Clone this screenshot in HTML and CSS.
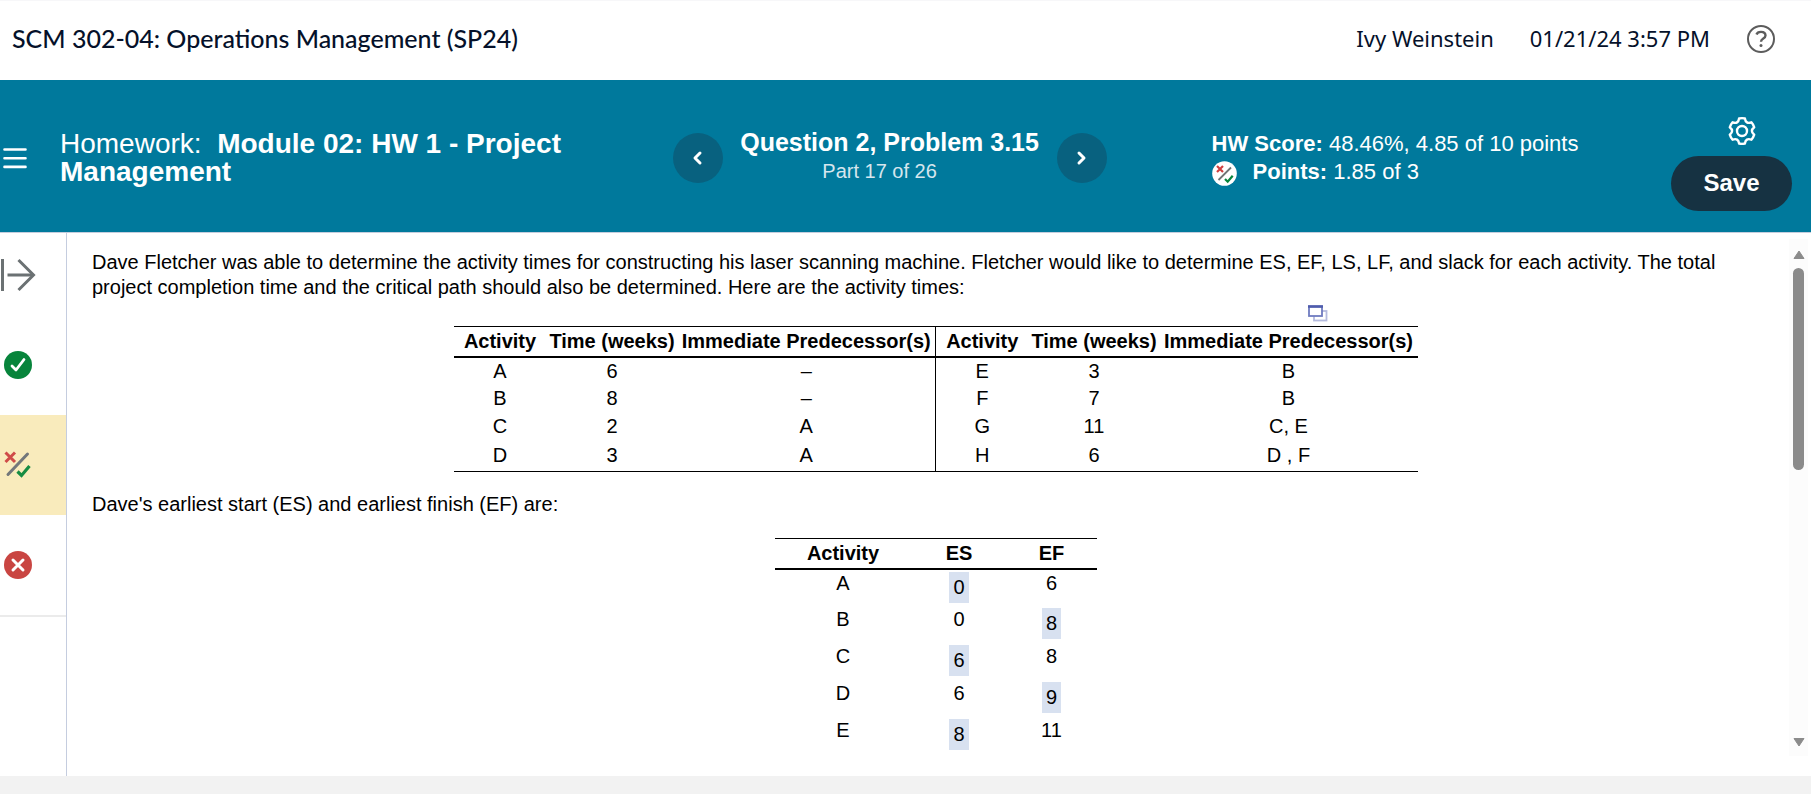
FILE: index.html
```html
<!DOCTYPE html>
<html lang="en">
<head>
<meta charset="utf-8">
<title>SCM 302-04: Operations Management (SP24)</title>
<link rel="stylesheet" href="styles.css">
</head>
<body>
<div class="page">
  <header class="topbar">
    <h1 class="course">SCM 302-04: Operations Management (SP24)</h1>
    <span class="user">Ivy Weinstein</span>
    <time class="clock" datetime="2024-01-21T15:57">01/21/24 3:57 PM</time>
    <button class="icon-button help" type="button" aria-label="Help">
      <svg width="30" height="30" viewBox="0 0 30 30" fill="none" stroke="#5c5c5c" stroke-width="2">
        <circle cx="15" cy="15" r="13"/>
        <path d="M10.500 10.500c.6-1.800 2.300-2.600 4.500-2.600 2.600 0 4.500 1.400 4.500 3.700 0 3.200-4.500 2.700-4.500 6.200" stroke-width="2.400"/>
        <circle cx="15" cy="21.600" r="1.500" fill="#5c5c5c" stroke="none"/>
      </svg>
    </button>
  </header>

  <section class="banner">
    <button class="icon-button menu" type="button" aria-label="Menu">
      <svg width="24" height="24" viewBox="0 0 24 24" stroke="#fff" stroke-width="2.600" stroke-linecap="round">
        <path d="M1.500 3.500h21M1.500 12.200h21M1.500 20.900h21"/>
      </svg>
    </button>
    <h2 class="assignment"><span class="kind">Homework:</span>&nbsp; Module 02: HW 1 - Project Management</h2>
    <nav class="pager" aria-label="Questions">
      <button class="round" type="button" aria-label="Previous question">
        <svg width="50" height="50" viewBox="0 0 50 50" fill="none" stroke="#fff" stroke-width="3" stroke-linecap="round" stroke-linejoin="round"><path d="M27 20l-5 5 5 5"/></svg>
      </button>
      <div class="question">
        <h3 class="question-title">Question 2, Problem 3.15</h3>
        <p class="part">Part 17 of 26</p>
      </div>
      <button class="round" type="button" aria-label="Next question">
        <svg width="50" height="50" viewBox="0 0 50 50" fill="none" stroke="#fff" stroke-width="3" stroke-linecap="round" stroke-linejoin="round"><path d="M22 20l5 5-5 5"/></svg>
      </button>
    </nav>
    <div class="score">
      <p class="score-line"><b>HW Score:</b> 48.46%, 4.85 of 10 points</p>
      <p class="score-line points">
        <svg width="25" height="28" viewBox="0 0 25 28" fill="none">
          <circle cx="12.500" cy="15.500" r="12.300" fill="#fff"/>
          <path d="M5 8l6 6M11 8l-6 6" stroke="#cf4040" stroke-width="2.200"/>
          <path d="M19 9.500L6.500 22" stroke="#6f7475" stroke-width="1.800"/>
          <path d="M13 21l2.700 2.700 5-6" stroke="#07843b" stroke-width="2.200"/>
        </svg>
        <span><b>Points:</b> 1.85 of 3</span>
      </p>
    </div>
    <div class="actions">
      <button class="icon-button" type="button" aria-label="Settings">
        <svg width="30" height="30" viewBox="0 0 30 30" fill="none" stroke="#fff" stroke-width="2.400" stroke-linejoin="round">
          <path d="M12.100 2.500A12.800 12.800 0 0 1 17.900 2.500Q18.800 8.400 24.400 6.300A12.800 12.800 0 0 1 27.200 11.300Q22.600 15 27.200 18.700A12.800 12.800 0 0 1 24.400 23.700Q18.800 21.600 17.900 27.500A12.800 12.800 0 0 1 12.100 27.500Q11.200 21.600 5.600 23.700A12.800 12.800 0 0 1 2.800 18.700Q7.400 15 2.800 11.300A12.800 12.800 0 0 1 5.600 6.300Q11.200 8.400 12.100 2.500z"/>
          <circle cx="15" cy="15" r="5"/>
        </svg>
      </button>
      <button class="save" type="button">Save</button>
    </div>
  </section>

  <div class="workspace">
    <nav class="rail" aria-label="Question list">
      <button class="rail-item expand" type="button" aria-label="Expand list">
        <svg width="36" height="34" viewBox="0 0 36 34" fill="none" stroke="#6b7173" stroke-width="3">
          <path d="M2.500 1v32M7.500 17H33"/><path d="M18.500 2l15 15-15 15"/>
        </svg>
      </button>
      <button class="rail-item" type="button" aria-label="Question 1, correct">
        <svg width="28" height="28" viewBox="0 0 28 28" fill="none" stroke="#fff" stroke-width="2.800" stroke-linecap="round" stroke-linejoin="round">
          <circle cx="14" cy="14" r="14" fill="#07843b" stroke="none"/><path d="M8 15l4 4 8-10.500"/>
        </svg>
      </button>
      <button class="rail-item current" type="button" aria-label="Question 2, partially correct">
        <svg width="28" height="28" viewBox="0 0 28 28" fill="none">
          <path d="M1.500 1.500l9.500 9.500M11 1.500L1.500 11" stroke="#cf4b48" stroke-width="3"/>
          <path d="M23.500 3L4 23.500" stroke="#73777a" stroke-width="3" stroke-linecap="round"/>
          <path d="M13.500 20.500l4 4L25.500 15" stroke="#178c42" stroke-width="3.200"/>
        </svg>
      </button>
      <button class="rail-item" type="button" aria-label="Question 3, incorrect">
        <svg width="28" height="28" viewBox="0 0 28 28" fill="none" stroke="#fff" stroke-width="3" stroke-linecap="round">
          <circle cx="14" cy="14" r="14" fill="#c94542" stroke="none"/><path d="M9 9l10 10M19 9L9 19"/>
        </svg>
      </button>
    </nav>

    <main class="content">
      <p class="text">Dave Fletcher was able to determine the activity times for constructing his laser scanning machine. Fletcher would like to determine ES, EF, LS, LF, and slack for each activity. The total project completion time and the critical path should also be determined. Here are the activity times:</p>
      <div class="figure">
        <button class="icon-button popout" type="button" aria-label="Open table in new window">
          <svg width="20" height="17" viewBox="0 0 20 17" fill="none">
            <rect x="6" y="6" width="12.500" height="9.500" stroke="#b5bbde" stroke-width="1.800"/>
            <rect x="1" y="1.500" width="13" height="9.500" fill="#fff" stroke="#6f7cc0" stroke-width="1.800"/>
            <path d="M0 1.500h15" stroke="#4f5cac" stroke-width="2.600"/>
          </svg>
        </button>
        <table class="data times">
          <colgroup><col class="c-act"><col class="c-time"><col class="c-pred"><col class="c-act"><col class="c-time"><col class="c-pred"></colgroup>
          <thead>
            <tr><th>Activity</th><th>Time (weeks)</th><th class="split">Immediate Predecessor(s)</th><th>Activity</th><th>Time (weeks)</th><th>Immediate Predecessor(s)</th></tr>
          </thead>
          <tbody>
            <tr><td>A</td><td>6</td><td class="split">–</td><td>E</td><td>3</td><td>B</td></tr>
            <tr><td>B</td><td>8</td><td class="split">–</td><td>F</td><td>7</td><td>B</td></tr>
            <tr><td>C</td><td>2</td><td class="split">A</td><td>G</td><td>11</td><td>C, E</td></tr>
            <tr><td>D</td><td>3</td><td class="split">A</td><td>H</td><td>6</td><td>D , F</td></tr>
          </tbody>
        </table>
      </div>
      <p class="text">Dave's earliest start (ES) and earliest finish (EF) are:</p>
      <table class="data results">
        <colgroup><col class="r-act"><col class="r-es"><col class="r-ef"></colgroup>
        <thead><tr><th>Activity</th><th>ES</th><th>EF</th></tr></thead>
        <tbody>
          <tr><td>A</td><td><span class="answer">0</span></td><td>6</td></tr>
          <tr><td>B</td><td>0</td><td><span class="answer">8</span></td></tr>
          <tr><td>C</td><td><span class="answer">6</span></td><td>8</td></tr>
          <tr><td>D</td><td>6</td><td><span class="answer">9</span></td></tr>
          <tr><td>E</td><td><span class="answer">8</span></td><td>11</td></tr>
        </tbody>
      </table>
    </main>

    <div class="scrollbar" aria-hidden="true">
      <svg width="12" height="10" viewBox="0 0 12 10"><path d="M6 1l5 7.500H1z" fill="#8b8b8b" stroke="#8b8b8b" stroke-linejoin="round"/></svg>
      <div class="track"><div class="thumb"></div></div>
      <svg width="12" height="10" viewBox="0 0 12 10"><path d="M6 9L1 1.500h10z" fill="#8b8b8b" stroke="#8b8b8b" stroke-linejoin="round"/></svg>
    </div>
  </div>
  <footer class="footer"></footer>
</div>
</body>
</html>
```
FILE: styles.css
```css
* { box-sizing: border-box; }

body {
  margin: 0;
  background: #fff;
  color: #000;
  font-family: "Liberation Sans", Arial, sans-serif;
  font-size: 20px;
}

h1, h2, h3, p { margin: 0; }
svg { display: block; }

button {
  border: 0;
  padding: 0;
  background: none;
  color: inherit;
  font: inherit;
  cursor: pointer;
}

.page {
  display: flex;
  flex-direction: column;
  min-height: 100vh;
}

/* Course bar */
.topbar {
  display: flex;
  align-items: center;
  height: 80px;
  padding: 0 35px 4px 12px;
  border-top: 1px solid #f7f7f9;
  color: #05112a;
}
.course {
  flex: 1;
  padding-bottom: 2px;
  font-family: Lato, sans-serif;
  font-size: 25px;
  font-weight: 500;
}
.user, .clock {
  padding-bottom: 2px;
  font-family: "Noto Sans", sans-serif;
  font-size: 22px;
}
.clock { margin-left: 36px; }
.help { margin-left: 36px; }

/* Assignment banner */
.banner {
  display: flex;
  align-items: center;
  height: 153px;
  padding-top: 4px;
  border-bottom: 1px solid #c5cddd;
  background: #00799c;
  color: #fff;
}
.menu {
  flex: 0 0 60px;
  padding-left: 3px;
}
.assignment {
  flex: 4 1 0;
  font-size: 28px;
  line-height: 28px;
}
.kind { font-weight: 400; }
.pager {
  display: flex;
  flex: 0 0 434px;
  align-items: center;
  justify-content: space-between;
}
.round {
  border-radius: 50%;
  background: #08617f;
}
.question {
  padding-bottom: 4px;
  text-align: center;
}
.question-title {
  font-size: 25px;
  line-height: 30px;
}
.part {
  padding-right: 20px;
  color: #d6e6ee;
  font-size: 20px;
  line-height: 28px;
}
.score {
  flex: 3 1 0;
  padding-left: 105px;
}
.score-line {
  font-size: 22px;
  line-height: 28px;
}
.points {
  display: flex;
  gap: 16px;
}
.actions {
  display: flex;
  flex: 0 0 140px;
  flex-direction: column;
  gap: 10px;
  padding: 10px 19px 0 0;
}
.actions .icon-button { align-self: center; margin-left: 20px; }
.save {
  height: 55px;
  border-radius: 28px;
  background: #163242;
  font-size: 24px;
  font-weight: 700;
}

/* Workspace */
.workspace {
  display: flex;
  flex: 1;
}
.rail {
  flex: 0 0 67px;
  border-right: 1px solid #c5cddf;
}
.rail-item {
  display: block;
  width: 100%;
  height: 100px;
  padding-left: 4px;
}
.expand {
  height: 82px;
  padding: 2px 0 0 0;
}
.current { background: #f9ebbc; }
.rail-item:last-child {
  height: 102px;
  border-bottom: 2px solid #ebebeb;
}
.content {
  flex: 1;
  padding: 17px 10px 16px 25px;
}
.text {
  padding-right: 24px;
  line-height: 25px;
}

.figure {
  width: max-content;
  margin: 5px auto 20px;
}
.popout {
  display: block;
  margin: 0 90px 4px auto;
}

.data {
  border-collapse: collapse;
  table-layout: fixed;
  text-align: center;
}
.data th, .data td { padding: 0; }
.data thead {
  border-top: 1px solid #000;
  border-bottom: 2px solid #000;
}

.times {
  width: 964px;
  border-bottom: 1px solid #000;
}
.times th { height: 30px; }
.times td { height: 28px; }
.times tr:last-child td { height: 31px; }
.times .split { border-right: 1px solid #000; }
.c-act { width: 93px; }
.c-time { width: 131px; }
.c-pred { width: 258px; }

.results {
  width: 322px;
  margin: 21px auto 0;
}
.results th { height: 30px; line-height: 28px; }
.data.results td {
  height: 37px;
  padding-top: 2px;
  line-height: 23px;
  vertical-align: top;
}
.r-act { width: 137px; }
.r-es { width: 95px; }
.r-ef { width: 90px; }
.answer {
  display: inline-block;
  padding: 4px;
  background: #d8e1f0;
}

/* Scroll indicator */
.scrollbar {
  display: flex;
  flex: 0 0 19px;
  flex-direction: column;
  align-items: center;
  margin: 6px 3px 20px 0;
  padding: 11px 0 9px 0;
  background: #fcfcfc;
}
.track {
  flex: 1;
  width: 11px;
  padding-top: 8px;
}
.thumb {
  height: 43%;
  border-radius: 6px;
  background: #8b8b8b;
}

.footer {
  height: 18px;
  background: #f2f2f2;
}
```
